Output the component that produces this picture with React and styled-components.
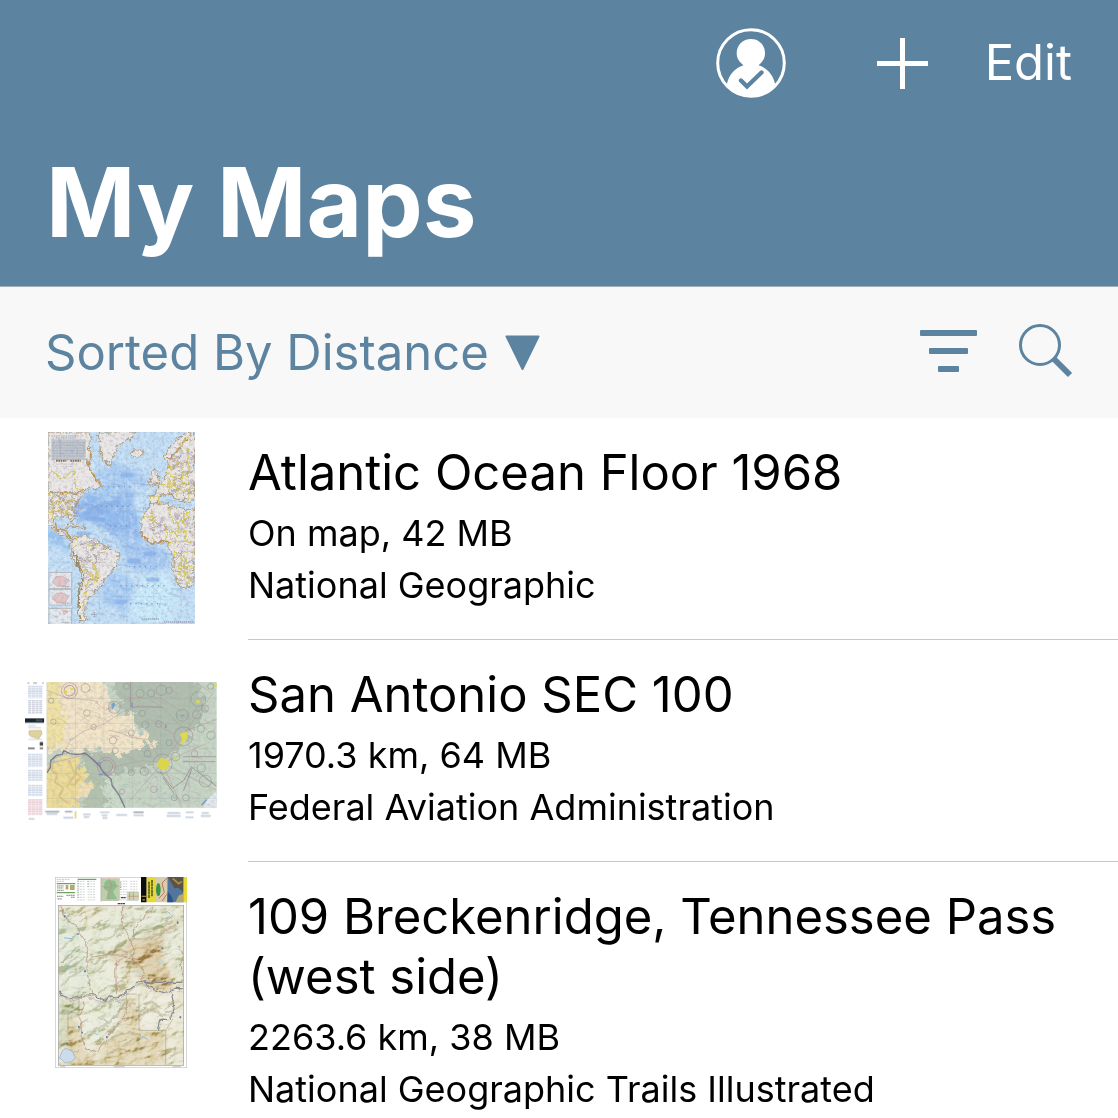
import React from "react";
import styled, { createGlobalStyle } from "styled-components";

const GlobalStyle = createGlobalStyle`
  * {
    box-sizing: border-box;
  }
  body {
    margin: 0;
    background-color: #fff;
    font-family: Inter, "Liberation Sans", sans-serif;
  }
  h1, h2, p, ul {
    margin: 0;
    padding: 0;
  }
  button {
    border: 0;
    padding: 0;
    background: none;
    color: inherit;
    font: inherit;
    cursor: pointer;
  }
  svg {
    display: block;
  }
`;

const Page = styled.div`
  height: 100vh;
  display: flex;
  flex-direction: column;
`;

const Header = styled.header`
  flex-shrink: 0;
  padding: 24px 46px 24px;
  color: #fff;
  background-color: #5c83a0;
  border-bottom: 1px solid #a3abb2;
  h1 {
    font-size: 96px;
    font-weight: 700;
    line-height: 120px;
    margin-top: 40px;
  }
`;

const Actions = styled.div`
  display: flex;
  justify-content: flex-end;
  align-items: center;
  height: 78px;
`;

const ActionButton = styled.button`
  font-size: 49px;
  line-height: 60px;
  margin-left: ${({ $gap }) => $gap || 0}px;
`;

const Toolbar = styled.div`
  flex-shrink: 0;
  display: flex;
  align-items: center;
  justify-content: space-between;
  height: 131px;
  padding: 0 45px;
  color: #5c83a0;
  background-color: #f8f8f8;
`;

const SortButton = styled.button`
  display: flex;
  align-items: center;
  gap: 16px;
  font-size: 49px;
  line-height: 60px;
`;

const Tools = styled.div`
  display: flex;
  align-items: center;
  gap: 42px;
  padding-bottom: 4px;
`;

const MapList = styled.ul`
  flex: 1;
  min-height: 0;
  overflow-y: auto;
  scrollbar-width: none;
  list-style: none;
`;

const MapRow = styled.li`
  display: flex;
  align-items: flex-start;
  gap: 31px;
  padding-left: 25px;
`;

const Thumb = styled.div`
  flex: 0 0 192px;
  height: 192px;
  margin-top: 14px;
  display: flex;
  align-items: center;
  justify-content: center;
`;

const Details = styled.div`
  flex: 1;
  min-width: 0;
  padding: 25px 46px 28px 0;
  border-bottom: 1px solid #c8c7cc;
  h2 {
    font-size: 49px;
    font-weight: 400;
    line-height: 60px;
    margin-bottom: 4px;
  }
  p {
    font-size: 36px;
    line-height: 52px;
  }
`;

const ProfileIcon = () => (
  <svg width="70" height="70" viewBox="0 0 70 70" fill="none">
    <circle cx="35" cy="35" r="33.3" stroke="#fff" strokeWidth="3" />
    <path
      fill="#fff"
      d="M35 11C27 11 20.700 17 20.700 25.200C20.700 30.500 23.500 34 27.500 37.200C19 40 12.700 46.500 10.800 56.500C17 65.500 25 69 35 69S53 65.500 59.200 56.500C57.300 46.500 51 40 42.500 37.200C46.500 34 49 30.500 49 25.200C49 17 43 11 35 11Z"
    />
    <path d="M25 52.500L31 58.500L45.500 44.500" stroke="#5c83a0" strokeWidth="4.400" strokeLinecap="round" />
  </svg>
);

const PlusIcon = () => (
  <svg width="51" height="51" viewBox="0 0 51 51">
    <path d="M25.500 0V51M0 25.500H51" stroke="#fff" strokeWidth="5" />
  </svg>
);

const TriangleIcon = () => (
  <svg width="35" height="36" viewBox="0 0 35 36">
    <path d="M1.500 1.500H33.500L17.500 34Z" fill="currentColor" stroke="currentColor" strokeWidth="2" strokeLinejoin="round" />
  </svg>
);

const FilterIcon = () => (
  <svg width="57" height="42" viewBox="0 0 57 42" fill="currentColor">
    <rect width="57" height="6" rx="1" />
    <rect x="9" y="18" width="39" height="6" rx="1" />
    <rect x="18" y="36" width="21" height="6" rx="1" />
  </svg>
);

const SearchIcon = () => (
  <svg width="54" height="54" viewBox="0 0 54 54" fill="none" stroke="currentColor">
    <circle cx="21" cy="21" r="19.500" strokeWidth="3" />
    <path d="M35 35L51 51" strokeWidth="6" />
  </svg>
);

// repeatable pseudo random numbers, so the map marks stay in place
const scatter = (count, seed, x, y, w, h) => {
  let s = seed;
  const next = () => {
    s = (s * 16807) % 2147483647;
    return s / 2147483647;
  };
  next();
  return Array.from({ length: count }, () => [x + next() * w, y + next() * h, next()]);
};

const atlanticLand = [
  "M24 21H145L154 45L148 70L155 92L140 112L150 128L153 150L170 158L186 186L166 194L148 190L128 204L119 226L97 254L103 280L93 291L86 270L68 278L42 279L38 301L52 317L73 314L68 325L91 336L111 335L112 344L91 342L60 330L24 298Z",
  "M93 352L112 337L143 333L166 344L187 356L194 369L216 376L239 386L233 407L220 427L214 446L196 457L187 477L170 489L158 506L145 517L138 550L134 570L143 584L124 590L113 575L114 536L121 493L124 452L115 426L98 405L92 380Z",
  "M174 21H287L274 39L248 53L230 66L221 88L211 121L192 107L180 72Z",
  "M330 239L363 233L382 235L386 246L410 245L440 254L463 254V458L453 484L420 489L405 457L397 418L400 394L387 373L385 354L362 349L336 355L316 344L300 321L307 275L320 252Z",
  "M463 21V222L446 230L433 213L427 234L406 221L390 205L378 207L358 216L350 232L332 235L327 211L346 207L352 187L341 178L363 169L379 157L379 136L389 120L371 104L382 75L408 45L430 28Z",
  "M326 173L336 157L330 139L345 131L350 150L362 170L347 180L327 178Z",
  "M270 85L283 75L306 75L309 87L291 96Z",
  "M75 301L96 296L116 303L137 304L132 311L104 306L79 307Z",
];

const atlanticBorders =
  "M34 135L62 163L102 135L106 184L131 200M24 205L61 203L98 204L118 191M37 205V283M57 206L61 277M79 207L83 274M25 237L104 225M28 259L100 251M110 342L113 360L98 372M137 337L151 367L176 358L192 370M125 420L153 408L165 431L174 447L169 471L145 437L127 440M142 435L151 459L138 480L134 522L125 560M304 277L333 275L381 316L378 350M331 275L342 318L330 346M333 252L337 272M385 247L389 278L412 300L449 264M412 300L404 349M430 257L433 318L463 323M390 319L433 318L438 350L463 350M385 356L425 348L463 352M399 388L425 378L463 384M399 425H463M423 391L416 447L450 466M434 393L435 448M441 424L444 480M381 111L392 134L417 116L402 88L420 57L442 35L458 46M379 141L401 158L425 148L448 161M361 169L379 189L400 181L424 198L462 188M387 156L385 203M401 155L409 212M425 117L428 187M442 70L446 222M404 179L462 176M420 146L462 139M327 213L350 215L357 232";

const insetPoints = [453, 503, 560];

const AtlanticMap = () => (
  <svg width="147" height="192" viewBox="24 21 440 576" preserveAspectRatio="none" role="img" aria-label="Atlantic Ocean Floor map">
    <defs>
      <filter id="atlSoft"><feGaussianBlur stdDeviation="1.800" /></filter>
      <filter id="atlDepth">
        <feTurbulence type="fractalNoise" baseFrequency=".030" numOctaves="3" seed="2" result="n" />
        <feDisplacementMap in="SourceGraphic" in2="n" scale="60" />
        <feGaussianBlur stdDeviation="6" />
      </filter>
      <filter id="atlCoast">
        <feTurbulence type="fractalNoise" baseFrequency=".070" numOctaves="3" seed="4" result="n" />
        <feDisplacementMap in="SourceGraphic" in2="n" scale="22" xChannelSelector="R" yChannelSelector="G" />
        <feGaussianBlur stdDeviation="1.500" />
      </filter>
      <filter id="atlGrain" x="0" y="0" width="1" height="1">
        <feTurbulence type="fractalNoise" baseFrequency="0.110" numOctaves="3" seed="5" />
        <feColorMatrix values="0 0 0 0 .3  0 0 0 0 .32  0 0 0 0 .46  2.500 2 0 0 -2.100" />
      </filter>
      <filter id="atlLight" x="0" y="0" width="1" height="1">
        <feTurbulence type="fractalNoise" baseFrequency=".060" numOctaves="3" seed="15" />
        <feColorMatrix values="0 0 0 0 .92  0 0 0 0 .97  0 0 0 0 1  3 1 0 0 -2" />
      </filter>
    </defs>
    <rect x="24" y="21" width="440" height="576" fill="#c2dff6" />
    <g filter="url(#atlDepth)">
      <path d="M106 216L194 187L292 204L284 260L307 343L270 362L225 335L178 300L111 299Z" fill="#93bdf0" />
      <path d="M236 310L322 358L382 378L394 440L322 437L254 423Z" fill="#a6caf4" />
      <path d="M209 437L264 450L288 531L240 561L177 529Z" fill="#a9cff5" />
      <path d="M177 133L250 112L320 165L250 210L185 190Z" fill="#a9cdf3" />
      <path d="M27 302L86 338L86 382L51 358L24 350Z" fill="#96c3ef" />
      <path d="M286 466L379 442L420 519L380 592L274 590Z" fill="#c8eafa" />
      <path d="M185 205L243 197L255 220L205 233Z" fill="#b9def9" />
    </g>
    <rect x="24" y="21" width="440" height="576" filter="url(#atlLight)" opacity=".350" />
    <g filter="url(#atlSoft)">
      {scatter(110, 51, 100, 125, 295, 450).map(([x, y, r], i) => (
        <path key={i} d={`M${x} ${y}l${8 + r * 18} ${r * 8 - 4}l9 4`} fill="none" stroke={r > 0.5 ? "#7ba2da" : "#dcf1fc"} strokeWidth={1 + r * 2} opacity=".600" />
      ))}
      {[[262, 150], [220, 234], [162, 250], [190, 258], [154, 280], [177, 282], [330, 385], [283, 407], [339, 463], [243, 530], [130, 326], [146, 264]].map(([x, y], i) => (
        <path key={i} d={`M${x - 20} ${y - 4}l18-3l22 3l-3 10l-24 2l-15-3z`} fill="#84aee9" opacity=".700" />
      ))}
    </g>
    <g filter="url(#atlCoast)">
      <g fill="#ebe7e5" stroke="#b09a78" strokeWidth="3">
        {atlanticLand.map((d) => <path key={d} d={d} />)}
      </g>
      <path d={atlanticBorders} fill="none" stroke="#d9ca5e" strokeWidth="4" />
      <path d="M28 203L60 202L107 208L128 195M140 66L151 92L143 108L153 140L178 180M44 296L54 315L74 312L90 336M300 318L314 340L336 354L385 352M380 104L404 87L440 41" fill="none" stroke="#c18f4b" strokeWidth="4" />
      <path d="M94 371L113 416L124 446L116 499L114 557L121 588M98 374L118 420L131 448L123 499" fill="none" stroke="#8f8460" strokeWidth="3" />
      {scatter(110, 72, 27, 200, 85, 74).concat(scatter(90, 17, 115, 350, 85, 80), scatter(80, 24, 320, 265, 140, 78), scatter(60, 88, 405, 350, 56, 125), scatter(100, 97, 388, 70, 72, 140), scatter(30, 9, 128, 430, 40, 70)).map(([x, y, r], i) => (
        <path key={i} d={`M${x} ${y}l${r * 10} ${r * 6 - 2}l5-3`} fill="none" stroke={["#a593b0", "#9a9aa2", "#b8a184"][i % 3]} strokeWidth="2" />
      ))}
    </g>
    <g filter="url(#atlSoft)">
      <rect x="34" y="43" width="103" height="62" fill="#c3c8ce" />
      <path d="M37 53H134M37 61H134M37 69H134M37 77H134M37 85H134M37 93H134M61 43V105" stroke="#a2abb6" strokeWidth="2" strokeDasharray="8 2" />
      <path d="M34 33H118M48 39H112" stroke="#a6adb2" strokeWidth="3" strokeDasharray="5 2" />
      <path d="M48 107H79M91 107H122" stroke="#80704c" strokeWidth="6" strokeDasharray="5 2" />
      <path d="M48 117H112M64 125H96" stroke="#aaa" strokeWidth="2" strokeDasharray="3 2" />
      <path d="M203 185H273M166 244H277M209 303H273M266 425H356M241 482H385M270 536H354" stroke="#5274a7" strokeWidth="3" strokeDasharray="3 13" />
      <path d="M24 104H150M24 206H463M24 309H463M24 412H463M24 515H463M97 22V596M178 22V596M260 22V596M341 22V596M422 22V596" stroke="#7593b6" strokeWidth="1" opacity=".400" />
      {insetPoints.map((y, i) => (
        <g key={y}>
          <rect x="27" y={y - 10} width="67" height={i === 2 ? 54 : 47} fill="#e3eaef" stroke="#b8aaa3" strokeWidth="2" />
          <path d={i === 2 ? `M37 ${y + 12}l17 4m10-22l20 6l-13 10` : `M37 ${y + 17}l12-15l17-2l20 11l-10 18l-25 2z`} fill="#e2c6c6" stroke="#cfa3a4" strokeWidth="2" />
          <path d={`M65 ${y + 32}h25`} stroke="#777" strokeWidth="2" strokeDasharray="3 2" />
        </g>
      ))}
      <path d="M154 568h15m-7-8v17M304 582h52M371 591h89" stroke="#8a829c" strokeWidth="3" strokeDasharray="4 2" />
    </g>
    <rect x="24" y="21" width="440" height="576" filter="url(#atlGrain)" opacity=".320" />
  </svg>
);

const airspaces = [
  [163, 61, 24], [211, 53, 13], [215, 128, 10], [235, 170, 8], [297, 111, 18], [333, 48, 9], [374, 69, 12], [407, 69, 11], [438, 60, 15], [461, 60, 10],
  [380, 129, 9], [390, 163, 11], [430, 161, 10], [348, 188, 9], [293, 210, 11], [300, 241, 9], [273, 288, 27], [348, 307, 9], [387, 303, 12], [441, 280, 29],
  [504, 198, 28], [500, 135, 18], [548, 86, 22], [543, 133, 12], [568, 115, 11], [556, 175, 11], [586, 195, 12], [480, 259, 13], [537, 250, 10], [569, 332, 18],
  [511, 382, 10], [476, 382, 9], [415, 357, 10], [396, 250, 10], [557, 293, 12], [461, 217, 9], [320, 364, 8], [585, 48, 9], [108, 91, 8], [115, 154, 8],
];

const SanAntonioMap = () => (
  <svg width="192" height="139" viewBox="30 32 574 417" preserveAspectRatio="none" role="img" aria-label="San Antonio SEC map">
    <defs>
      <filter id="saSoft"><feGaussianBlur stdDeviation="1.600" /></filter>
      <filter id="saEdge">
        <feTurbulence type="fractalNoise" baseFrequency=".050" numOctaves="4" seed="6" result="n" />
        <feDisplacementMap in="SourceGraphic" in2="n" scale="55" xChannelSelector="R" yChannelSelector="G" />
        <feGaussianBlur stdDeviation="1.500" />
      </filter>
      <filter id="saGrain" x="0" y="0" width="1" height="1">
        <feTurbulence type="fractalNoise" baseFrequency=".090" numOctaves="3" seed="8" />
        <feColorMatrix values="0 0 0 0 .4  0 0 0 0 .42  0 0 0 0 .42  2 0 0 0 -.800" />
      </filter>
      <clipPath id="saClip"><rect x="95" y="35" width="508" height="377" /></clipPath>
    </defs>
    <rect x="30" y="32" width="574" height="417" fill="#fff" />
    <g clipPath="url(#saClip)">
      <rect x="90" y="35" width="515" height="378" fill="#c6d5c4" />
      <g filter="url(#saEdge)">
        <path d="M290 0H520L575 100L555 150L510 220L440 270L370 300L220 325L200 248L315 245L410 210L310 90Z" fill="#b0bfae" />
        <path d="M60 5H250L285 82L275 105L305 128L350 132L360 178L410 203L432 220L360 229L328 260L290 245L235 237L190 250L142 242L60 237Z" fill="#f3e5c8" />
        <path d="M60 5H140L130 80L148 137L151 218L60 246Z" fill="#f1e2a4" />
        <path d="M60 307L142 255L191 264L216 320L225 349L187 370L185 440H60Z" fill="#eedc98" />
        <path d="M200 339L230 350L204 383L181 376Z" fill="#f2dfb8" />
        <path d="M190 255L240 280L280 340L300 440H190L230 350Z" fill="#b3c3ae" />
        <path d="M278 316L305 355L322 412H277L261 360Z" fill="#cbdcc8" />
      </g>
      <path d="M560 417L575 388L605 360V417Z" fill="#e3ebf1" />
      <rect x="95" y="35" width="508" height="377" filter="url(#saGrain)" opacity=".400" />
      <g filter="url(#saSoft)" fill="none">
        <path d="M96 84H603M96 159H603M96 234H603M96 309H603M96 384H603M181 35V412M266 35V412M351 35V412M436 35V412M521 35V412" stroke="#8e9b9d" strokeWidth="1" opacity=".600" />
        {scatter(90, 90, 310, 50, 260, 350).concat(scatter(30, 41, 100, 45, 200, 350)).map(([x, y, r], i) => (
          <path key={i} d={`M${x} ${y}l${8 + r * 14} ${r * 26 - 12}l${r * 16} 8`} stroke={r > 0.5 ? "#ae9393" : "#819eab"} strokeWidth="1.500" opacity=".550" />
        ))}
        <path d="M145 252L165 211L205 183L268 160L320 125L375 105L443 113L512 181L441 278L380 271L285 291L245 246L97 280M512 181L603 147M512 181L590 70L540 35M441 278L603 360M441 278L500 412M441 278L340 394M441 278L568 221M281 180L320 189L345 201L400 208L441 278M96 60L152 82L237 91L270 120L339 84L436 83L500 126" stroke="#b59c97" strokeWidth="2" opacity=".800" />
        {airspaces.map(([x, y, r], i) => (
          <circle key={i} cx={x} cy={y} r={r} stroke={i % 4 === 0 ? "#a58598" : "#8f8f90"} strokeWidth="2" opacity=".800" />
        ))}
        <circle cx="163" cy="61" r="16" stroke="#ab7591" strokeWidth="2" />
        <circle cx="273" cy="288" r="19" stroke="#ad829a" strokeWidth="2" />
        <path d="M96 307L106 291L107 271L124 255L141 252L146 241L164 250L188 253L210 249L234 268L253 286L264 306L287 326L291 347L310 372L329 412" stroke="#737a88" strokeWidth="4" />
        <path d="M97 300L110 270L144 249L180 249L217 256L245 284L276 312L293 345L323 391" stroke="#a99aa9" strokeWidth="2" />
        <path d="M503 259H601M502 274H599M345 35V110H442" stroke="#9c8997" strokeWidth="2" />
        <path d="M504 361L530 292L603 348M433 303L471 354L506 329L528 288M442 321L476 370" stroke="#8c7f84" strokeWidth="2" />
        <path d="M116 268L110 300L125 314L119 335L144 352L132 378L157 398M162 270L175 303L197 320L177 345L160 338M187 285L178 316L154 351" stroke="#c5ae72" strokeWidth="6" opacity=".450" />
      </g>
      <g filter="url(#saSoft)">
        <path d="M425 279L435 264L453 266L462 278L455 296L432 296Z" fill="#dbd649" />
        <path d="M492 190L514 184L516 202L502 220L493 222L500 207Z" fill="#ded950" />
        <path d="M542 90h10v9h-10zM476 260h8v7h-8zM148 60h8v9h-8zM166 53h9v6h-9zM597 40h7v10h-7z" fill="#dfd750" />
        <path d="M288 101L297 96L300 104L290 119Z" fill="#7a9fc8" />
        <path d="M249 278h9M250 313h12M350 97v13M497 136h7M451 163v10M558 404l15-16" stroke="#7396ca" strokeWidth="4" />
      </g>
    </g>
    <g filter="url(#saSoft)">
      <path d="M37 38H43M54 38H66M81 38H86" stroke="#999" strokeWidth="3" />
      <rect x="30" y="144" width="57" height="13" fill="#17252f" />
      <path d="M62 150H82" stroke="#667d8d" strokeWidth="3" />
      <path d="M42 181L78 180L81 190L71 205L60 202L49 199L42 193Z" fill="#e0d29b" stroke="#b9b28e" strokeWidth="2" />
      <path d="M39 166H62M39 172H78M40 207H82" stroke="#b2bfd0" strokeWidth="2" />
      <rect x="74" y="215" width="10" height="11" fill="#444" />
      <path d="M39 234H59M74 234H84" stroke="#666" strokeWidth="4" />
      {[[47, 83], [251, 289], [299, 333], [344, 377], [387, 434]].map(([top, bottom], i) => (
        <path key={top} d={`M44 ${top}V${bottom}M55 ${top}V${bottom}M66 ${top}V${bottom}M77 ${top}V${bottom}`} stroke={i === 4 ? "#d7a4b1" : "#a5b7d3"} strokeWidth="10" strokeDasharray="4 3" opacity=".700" />
      ))}
      <path d="M44 90V130M55 90V130M66 90V130M77 90V130" stroke="#a5a9c1" strokeWidth="9" strokeDasharray="3 3" opacity=".800" />
      <path d="M91 424H132M95 431H127M150 424H171M145 442H174M204 432H226M206 440H222M255 426H282M259 435H277M262 443H276M303 434H335M354 426H384M355 435H385M456 428H494M454 437H496M511 426H535M510 441H534M559 428H580M556 437H586M42 446H58" stroke="#b6c3d4" strokeWidth="5" strokeDasharray="5 1" />
      <path d="M91 424H132M150 424H171M355 426H384" stroke="#9b9f9f" strokeWidth="4" strokeDasharray="5 1" />
      <path d="M181 422V445" stroke="#ddc95b" strokeWidth="4" />
    </g>
  </svg>
);

const BreckenridgeMap = () => (
  <svg width="132" height="191" viewBox="31 18 396 575" preserveAspectRatio="none" role="img" aria-label="Breckenridge, Tennessee Pass map">
    <defs>
      <filter id="brSoft"><feGaussianBlur stdDeviation="1.500" /></filter>
      <filter id="brTone"><feGaussianBlur stdDeviation="8" /></filter>
      <filter id="brRelief" x="0" y="0" width="1" height="1">
        <feTurbulence type="fractalNoise" baseFrequency=".016 .024" numOctaves="4" seed="9" />
        <feColorMatrix values="0 0 0 0 0  0 0 0 0 0  0 0 0 0 0  1 0 0 0 0" />
        <feDiffuseLighting surfaceScale="34" lightingColor="#fff">
          <feDistantLight azimuth="225" elevation="50" />
        </feDiffuseLighting>
      </filter>
      <filter id="brLines">
        <feTurbulence type="fractalNoise" baseFrequency=".060" numOctaves="2" seed="3" result="n" />
        <feDisplacementMap in="SourceGraphic" in2="n" scale="14" xChannelSelector="R" yChannelSelector="G" />
        <feGaussianBlur stdDeviation="1.500" />
      </filter>
      <clipPath id="brClip"><rect x="42" y="105" width="374" height="479" /></clipPath>
    </defs>
    <rect x="32" y="19" width="394" height="573" fill="#fff" stroke="#c3c7c6" strokeWidth="2" />
    <g clipPath="url(#brClip)">
      <rect x="42" y="105" width="374" height="479" fill="#dcd9be" />
      <g filter="url(#brTone)">
        <path d="M42 112L126 175L132 250L130 367L73 380L42 365Z" fill="#d3dbc4" />
        <path d="M135 165L230 105H393L397 146L344 194L266 213L223 269L145 257Z" fill="#d6dac0" />
        <path d="M244 214L321 193L398 145L408 170L352 220L359 272L386 334L376 379L285 329L246 260Z" fill="#c6b183" />
        <path d="M353 190L413 154V315L384 303Z" fill="#d9dcc4" />
        <path d="M136 270L236 266L216 318L216 391L139 370Z" fill="#d9ddc3" />
        <path d="M65 435L103 460L114 520L160 584H71Z" fill="#cdbd91" />
        <path d="M177 519L244 472L274 386L286 466L362 481L363 584H158Z" fill="#cfbf93" />
        <path d="M125 389L215 389L235 452L190 499L129 532L108 456Z" fill="#dadec6" />
        <path d="M283 381L376 370L385 437L337 478L282 477Z" fill="#e2dfca" />
        <path d="M43 377L105 391L105 430L67 443L63 540L42 534Z" fill="#bfc4a0" />
        <path d="M190 250L245 225L250 265L215 290ZM225 390L275 380L265 450L225 460Z" fill="#c9b78e" />
      </g>
      <rect x="42" y="105" width="374" height="479" filter="url(#brRelief)" style={{ mixBlendMode: "soft-light" }} />
      <g filter="url(#brLines)" fill="none">
        <path d="M132 270L151 280L170 264L199 245L230 237L250 250M147 220L170 204L190 208L214 182L235 162M269 191L294 179L319 174L350 163L386 132M261 205L305 206L349 185L398 158M135 311L162 300L181 273M49 344L84 316L121 290M45 311L79 287L124 257M48 276L76 250L101 224M50 235L72 214L96 190M146 417L172 397L203 392M126 504L154 477L183 464L220 430L240 395M298 401L324 394L349 414M290 434L325 413L352 436M177 520L206 499L245 487L288 493M185 554L221 536L270 545L304 528" stroke="#91946c" strokeWidth="7" opacity=".350" />
        {scatter(130, 31, 45, 115, 358, 455).map(([x, y, r], i) => (
          <path key={i} d={`M${x} ${y}l${4 + r * 14} ${-r * 12}l7-2`} stroke={["#9a9670", "#f1eddb", "#a9a27e"][i % 3]} strokeWidth={r * 3 + 2} opacity=".450" />
        ))}
        <path d="M51 108L56 132L71 150L92 161L106 184L123 216L128 239L127 306L135 343L146 373M235 105L230 149L243 183L255 208L269 238L263 270M140 260L181 252L241 253L278 271L300 307L287 327M269 205L266 180L290 145L326 106M106 376L119 405L105 437L113 508L126 536L157 544L187 501L232 456M250 385L239 438L187 500M217 267L213 300L216 369M400 226L417 254L406 287L416 320" stroke="#b69382" strokeWidth="2.500" />
        <path d="M42 361L55 374L77 385L92 378L109 381L122 374L144 372L158 379L180 390L202 376L222 381L246 362L260 357L274 336L299 330L313 345L333 358L359 367L377 359L384 385L388 412L376 447L349 446L341 480M299 335H416M384 360L391 350L414 352" stroke="#848a8e" strokeWidth="3.500" />
        <path d="M42 370L76 390L123 378L180 395L224 385L261 361L279 341L304 343L321 360" stroke="#bea1b1" strokeWidth="2" />
      </g>
      <g filter="url(#brSoft)" fill="none">
        <path d="M42 427H103V382M70 427V481M283 370V480H363V584M277 371L245 370V430M363 480L385 445" stroke="#8c9270" strokeWidth="2" opacity=".700" />
        <path d="M58 201L83 204M67 256L78 251M66 287L80 290M302 124L311 119M371 123L377 131M177 446L189 454M150 488L159 493M213 391L229 397M291 497L310 507" stroke="#83bcdd" strokeWidth="3" />
        <path d="M53 540L64 534L83 543L92 562L80 574L60 577L45 562Z" fill="#ccdcea" stroke="#9aabc0" strokeWidth="2" />
        <path d="M341 269L350 273L354 282M274 303L287 308" stroke="#b5dae8" strokeWidth="6" />
        <path d="M118 302h6M60 133v7M100 187v5M351 233h5M399 152v7M407 437v6M100 469h5M111 486h4M184 500h4M65 519h5" stroke="#557aa8" strokeWidth="5" />
      </g>
    </g>
    <rect x="41" y="104" width="376" height="481" fill="none" stroke="#9a9c98" strokeWidth="2" />
    <g filter="url(#brSoft)">
      <path d="M36 38H92M99 25H155M36 65H91" stroke="#72a25e" strokeWidth="4" />
      <path d="M36 25H75M36 31H60" stroke="#a5aba5" strokeWidth="2" strokeDasharray="6 2" />
      <path d="M37 45H57M37 51H56M37 58H57M37 76H56M65 73H91M79 79H90M38 84H52" stroke="#888" strokeWidth="3" strokeDasharray="5 1" />
      <path d="M63 42h8v14h-8zM76 42h14v15h-14z" fill="#b3a96e" />
      {[31, 39, 47, 55, 63, 71, 79, 87].map((y) => (
        <path key={y} d={`M98 ${y}H120M129 ${y}H153M226 ${y}H248M257 ${y}H278`} stroke="#b9c0c3" strokeWidth="2" strokeDasharray="6 2" />
      ))}
      <path d="M100 29V83M130 31V52M228 34V57" stroke="#849d83" strokeWidth="3" strokeDasharray="3 4" />
      <path d="M169 21V92" stroke="#999" strokeWidth="2" />
      <rect x="171" y="23" width="53" height="66" fill="#bccfaa" stroke="#bb8276" />
      <path d="M180 34L187 27L211 29L217 48L205 62L217 85H184L191 62L177 53Z" fill="#8fbd90" />
      <path d="M172 46L187 51L210 42L222 47M193 24L202 46L190 67L195 86" fill="none" stroke="#c58a80" strokeWidth="2" />
      <rect x="249" y="63" width="33" height="25" fill="#d0d4b5" stroke="#9bb095" />
      <path d="M255 64V87M266 64V87M249 76H282" stroke="#b58c79" strokeWidth="2" />
      <path d="M229 80H243M219 98H241" stroke="#444" strokeWidth="4" strokeDasharray="7 1" />
      <rect x="289" y="18" width="17" height="76" fill="#111" />
      <path d="M291 76H304M293 87H301" stroke="#c9ad27" strokeWidth="3" />
      <rect x="306" y="18" width="28" height="76" fill="#e4d836" />
      <path d="M313 32V82M322 27V77" stroke="#5b5b20" strokeWidth="5" strokeDasharray="9 1" />
      <rect x="334" y="18" width="34" height="76" fill="#d9ceac" />
      <path d="M342 83L359 65L352 36L368 21M353 90L366 70" fill="none" stroke="#b07864" strokeWidth="3" />
      <ellipse cx="341" cy="56" rx="7" ry="20" fill="#389146" />
      <path d="M368 18H417V94H368Z" fill="#53749c" />
      <path d="M370 18H416V64L401 50L389 52Z" fill="#5a5349" />
      <path d="M369 61L380 75L386 94H368Z" fill="#2a538e" />
      <path d="M392 94L402 74L417 68V94Z" fill="#b4aa6f" />
      <path d="M384 22L402 38L412 31" fill="none" stroke="#b28f3d" strokeWidth="5" />
      <rect x="417" y="18" width="10" height="76" fill="#e8db35" />
      <path d="M47 589H62M206 589H240M384 589H409" stroke="#aaa" strokeWidth="2" />
    </g>
  </svg>
);

const maps = [
  { title: "Atlantic Ocean Floor 1968", info: "On map, 42 MB", publisher: "National Geographic", Preview: AtlanticMap },
  { title: "San Antonio SEC 100", info: "1970.3 km, 64 MB", publisher: "Federal Aviation Administration", Preview: SanAntonioMap },
  {
    title: "109 Breckenridge, Tennessee Pass (west side)",
    info: "2263.6 km, 38 MB",
    publisher: "National Geographic Trails Illustrated",
    Preview: BreckenridgeMap,
  },
];

function App() {
  return (
    <Page>
      <GlobalStyle />
      <Header>
        <Actions>
          <ActionButton type="button" aria-label="Account">
            <ProfileIcon />
          </ActionButton>
          <ActionButton type="button" aria-label="Add map" $gap={91}>
            <PlusIcon />
          </ActionButton>
          <ActionButton type="button" $gap={57}>Edit</ActionButton>
        </Actions>
        <h1>My Maps</h1>
      </Header>
      <Toolbar>
        <SortButton type="button">
          Sorted By Distance
          <TriangleIcon />
        </SortButton>
        <Tools>
          <button type="button" aria-label="Filter">
            <FilterIcon />
          </button>
          <button type="button" aria-label="Search">
            <SearchIcon />
          </button>
        </Tools>
      </Toolbar>
      <MapList>
        {maps.map(({ title, info, publisher, Preview }) => (
          <MapRow key={title}>
            <Thumb>
              <Preview />
            </Thumb>
            <Details>
              <h2>{title}</h2>
              <p>{info}</p>
              <p>{publisher}</p>
            </Details>
          </MapRow>
        ))}
      </MapList>
    </Page>
  );
}

export default App;
